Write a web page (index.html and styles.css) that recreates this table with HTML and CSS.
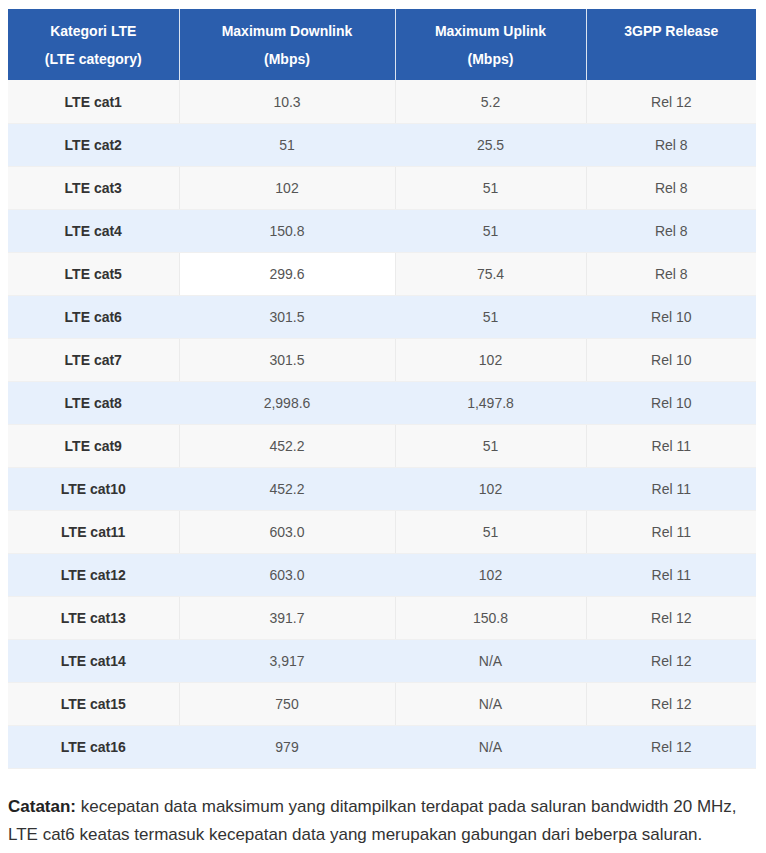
FILE: index.html
```html
<!DOCTYPE html>
<html>
<head>
<meta charset="utf-8">
<link rel="stylesheet" href="styles.css">
</head>
<body>
<table class="lte">
  <colgroup>
    <col class="c1"><col class="c2"><col class="c3"><col class="c4">
  </colgroup>
  <thead>
    <tr>
      <th>Kategori LTE<br>(LTE category)</th>
      <th>Maximum Downlink<br>(Mbps)</th>
      <th>Maximum Uplink<br>(Mbps)</th>
      <th>3GPP Release</th>
    </tr>
  </thead>
  <tbody>
    <tr><td>LTE cat1</td><td>10.3</td><td>5.2</td><td>Rel 12</td></tr>
    <tr><td>LTE cat2</td><td>51</td><td>25.5</td><td>Rel 8</td></tr>
    <tr><td>LTE cat3</td><td>102</td><td>51</td><td>Rel 8</td></tr>
    <tr><td>LTE cat4</td><td>150.8</td><td>51</td><td>Rel 8</td></tr>
    <tr><td>LTE cat5</td><td class="hover">299.6</td><td>75.4</td><td>Rel 8</td></tr>
    <tr><td>LTE cat6</td><td>301.5</td><td>51</td><td>Rel 10</td></tr>
    <tr><td>LTE cat7</td><td>301.5</td><td>102</td><td>Rel 10</td></tr>
    <tr><td>LTE cat8</td><td>2,998.6</td><td>1,497.8</td><td>Rel 10</td></tr>
    <tr><td>LTE cat9</td><td>452.2</td><td>51</td><td>Rel 11</td></tr>
    <tr><td>LTE cat10</td><td>452.2</td><td>102</td><td>Rel 11</td></tr>
    <tr><td>LTE cat11</td><td>603.0</td><td>51</td><td>Rel 11</td></tr>
    <tr><td>LTE cat12</td><td>603.0</td><td>102</td><td>Rel 11</td></tr>
    <tr><td>LTE cat13</td><td>391.7</td><td>150.8</td><td>Rel 12</td></tr>
    <tr><td>LTE cat14</td><td>3,917</td><td>N/A</td><td>Rel 12</td></tr>
    <tr><td>LTE cat15</td><td>750</td><td>N/A</td><td>Rel 12</td></tr>
    <tr><td>LTE cat16</td><td>979</td><td>N/A</td><td>Rel 12</td></tr>
  </tbody>
</table>
<p class="note"><strong>Catatan:</strong> kecepatan data maksimum yang ditampilkan terdapat pada saluran bandwidth 20 MHz, LTE cat6 keatas termasuk kecepatan data yang merupakan gabungan dari beberpa saluran.</p>
</body>
</html>
```
FILE: styles.css
```css
body {
  margin: 8px;
  background: #ffffff;
  font-family: "Liberation Sans", Arial, sans-serif;
  color: #333333;
}
.lte {
  width: 748px;
  border-collapse: collapse;
  table-layout: fixed;
  margin-top: 1px;
  font-size: 14px;
}
.c1 { width: 171px; }
.c2 { width: 216px; }
.c3 { width: 191px; }
.c4 { width: 170px; }
.lte th {
  background: #2b5ead;
  color: #ffffff;
  font-weight: bold;
  text-align: center;
  vertical-align: top;
  line-height: 28px;
  height: 71px;
  padding: 8px 6px 7px;
  box-sizing: border-box;
  border-left: 1px solid #dbe4f1;
}
.lte th:first-child { border-left: none; }
.lte td {
  height: 43px;
  box-sizing: border-box;
  padding: 1px 6px 0;
  text-align: center;
  vertical-align: middle;
  color: #555555;
  border-left: 1px solid #ebebeb;
  border-bottom: 1px solid #f0f0f0;
}
.lte td:first-child {
  font-weight: bold;
  color: #333333;
  border-left: none;
}
.lte tbody tr:nth-child(odd) td { background: #f8f8f8; }
.lte tbody tr:nth-child(even) td { background: #e7f0fc; border-left-color: #e7f0fc; }
.lte tbody tr td.hover { background: #ffffff; }
.note {
  margin: 24px 0 0;
  font-size: 17px;
  line-height: 28px;
  color: #333333;
}
.note strong { color: #222222; }
```
